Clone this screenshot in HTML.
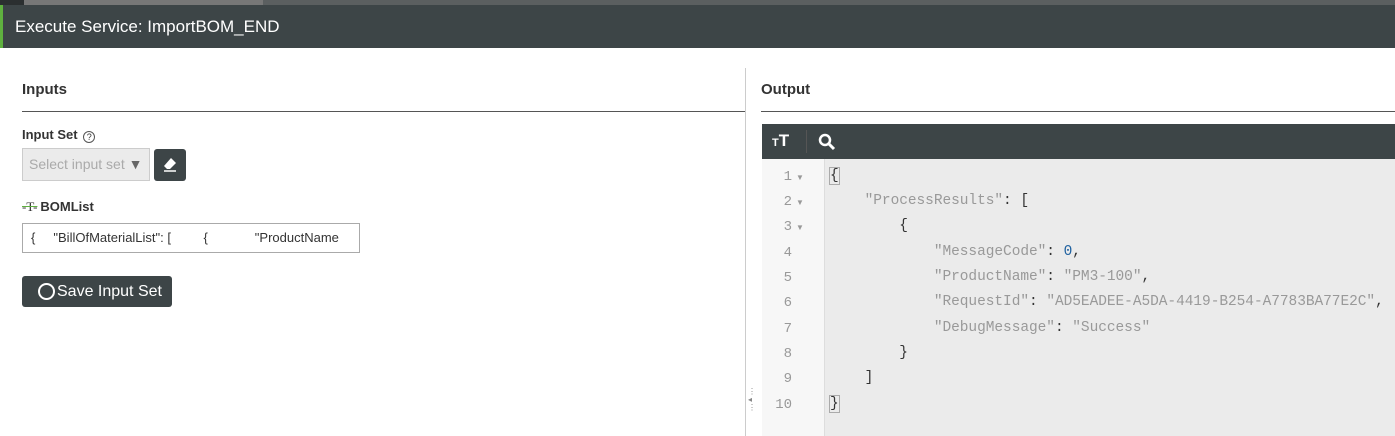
<!DOCTYPE html>
<html><head><style>
*{margin:0;padding:0;box-sizing:border-box}
body{width:1395px;height:436px;overflow:hidden;background:#fff;font-family:"Liberation Sans",sans-serif;position:relative}
.top{position:absolute;left:0;top:0;width:1395px;height:5px;background:#777}
.top .a{position:absolute;left:0;top:0;width:24px;height:5px;background:#2b2f30}
.top .b{position:absolute;left:263px;top:0;width:1132px;height:5px;background:#5b5f60}
.hdr{position:absolute;left:0;top:5px;width:1395px;height:43px;background:#3d4547;border-left:3px solid #5fb13f;color:#fff;font-size:17px;line-height:43px;padding-left:12px}
.h2{position:absolute;font-size:15px;font-weight:bold;color:#333}
.rule{position:absolute;height:1px;background:#555}
.vdiv{position:absolute;left:745px;top:68px;width:1px;height:368px;background:#ccc}
.lbl{position:absolute;font-size:13px;font-weight:bold;color:#333}
.sel{position:absolute;left:22px;top:148px;width:128px;height:33px;background:#ebebeb;border:1px solid #ccc;color:#aaa;font-size:14px;line-height:31px;padding-left:6px}
.er{position:absolute;left:154px;top:149px;width:32px;height:32px;background:#3d4547;border-radius:3px}
.inp{position:absolute;left:22px;top:223px;width:338px;height:30px;border:1px solid #aaa;font-size:13px;line-height:28px;padding-left:8px;color:#333;white-space:pre;overflow:hidden}
.btn{position:absolute;left:22px;top:276px;width:150px;height:31px;background:#3d4547;border-radius:3px;color:#fff;font-size:16px;line-height:31px;padding-left:35px}
.btn i{position:absolute;left:16px;top:7px;width:17px;height:17px;border:2.5px solid #fff;border-radius:50%}
.tb{position:absolute;left:762px;top:124px;width:633px;height:35px;background:#3d4547}
.gut{position:absolute;left:762px;top:159px;width:63px;height:277px;background:#f7f7f7;border-right:1px solid #ddd}
.code{position:absolute;left:825px;top:159px;width:570px;height:277px;background:#ebebeb}
.ln{position:absolute;left:762px;width:30px;text-align:right;font-family:"Liberation Mono",monospace;font-size:14px;color:#999}
.ar{position:absolute;left:796px;font-size:8px;color:#999}
.cl{position:absolute;left:830px;font-family:"Liberation Mono",monospace;font-size:14.5px;color:#333;white-space:pre;letter-spacing:-0.05px}
.s{color:#999}.n{color:#1f61a0}
</style></head><body>
<div class="top"><div class="a"></div><div class="b"></div></div>
<div class="hdr">Execute Service: ImportBOM_END</div>
<div class="h2" style="left:22px;top:81px">Inputs</div>
<div class="rule" style="left:22px;top:111px;width:723px"></div>
<div class="vdiv"></div>
<div class="h2" style="left:761px;top:81px">Output</div>
<div class="rule" style="left:761px;top:111px;width:634px"></div>
<div class="lbl" style="left:22px;top:127px">Input Set <span style="display:inline-block;width:12px;height:12px;border:1px solid #555;border-radius:50%;font-size:9px;line-height:10px;text-align:center;font-weight:normal;vertical-align:-1px;margin-left:2px">?</span></div>
<div class="sel">Select input set <span style="color:#666">▼</span></div>
<div class="er"><svg width="32" height="32" viewBox="0 0 32 32"><path d="M17 9l5 5-6 6h-3l-3-3z" fill="#fff"/><path d="M10 22h12" stroke="#fff" stroke-width="1.5"/></svg></div>
<div class="lbl" style="left:22px;top:199px"><span style="color:#333;font-family:'Liberation Serif',serif;font-weight:normal;text-decoration:line-through;text-decoration-color:#5fb13f;margin-right:3px">-T-</span>BOMList</div>
<div class="inp">{     "BillOfMaterialList": [         {             "ProductName</div>
<div class="btn"><i></i>Save Input Set</div>
<div class="tb">
<div style="position:absolute;left:10px;top:7px;color:#fff;font-weight:bold;font-size:17px"><span style="font-size:11px">T</span>T</div>
<div style="position:absolute;left:44px;top:6px;width:1px;height:23px;background:#555"></div>
<svg style="position:absolute;left:56px;top:9px" width="18" height="18" viewBox="0 0 18 18"><circle cx="7" cy="7" r="5" stroke="#fff" stroke-width="2.5" fill="none"/><path d="M11 11l5 5" stroke="#fff" stroke-width="3"/></svg>
</div>
<div class="gut"></div><div class="code"></div>
<div class="ln" style="top:169px">1</div><div class="ar" style="top:173px">▼</div>
<div class="ln" style="top:194px">2</div><div class="ar" style="top:198px">▼</div>
<div class="ln" style="top:219px">3</div><div class="ar" style="top:223px">▼</div>
<div class="ln" style="top:245px">4</div>
<div class="ln" style="top:270px">5</div>
<div class="ln" style="top:295px">6</div>
<div class="ln" style="top:321px">7</div>
<div class="ln" style="top:346px">8</div>
<div class="ln" style="top:371px">9</div>
<div class="ln" style="top:397px">10</div>
<div class="cl" style="top:168px"><span style="outline:1px solid #aaa">{</span></div>
<div class="cl" style="top:193px">    <span class="s">"ProcessResults"</span>: [</div>
<div class="cl" style="top:218px">        {</div>
<div class="cl" style="top:244px">            <span class="s">"MessageCode"</span>: <span class="n">0</span>,</div>
<div class="cl" style="top:269px">            <span class="s">"ProductName"</span>: <span class="s">"PM3-100"</span>,</div>
<div class="cl" style="top:294px">            <span class="s">"RequestId"</span>: <span class="s">"AD5EADEE-A5DA-4419-B254-A7783BA77E2C"</span>,</div>
<div class="cl" style="top:320px">            <span class="s">"DebugMessage"</span>: <span class="s">"Success"</span></div>
<div class="cl" style="top:345px">        }</div>
<div class="cl" style="top:370px">    ]</div>
<div class="cl" style="top:396px"><span style="outline:1px solid #aaa">}</span></div>
<div style="position:absolute;left:748px;top:388px;font-size:8px;color:#888;line-height:8px">⋮<br>◂<br>⋮</div>
</body></html>
